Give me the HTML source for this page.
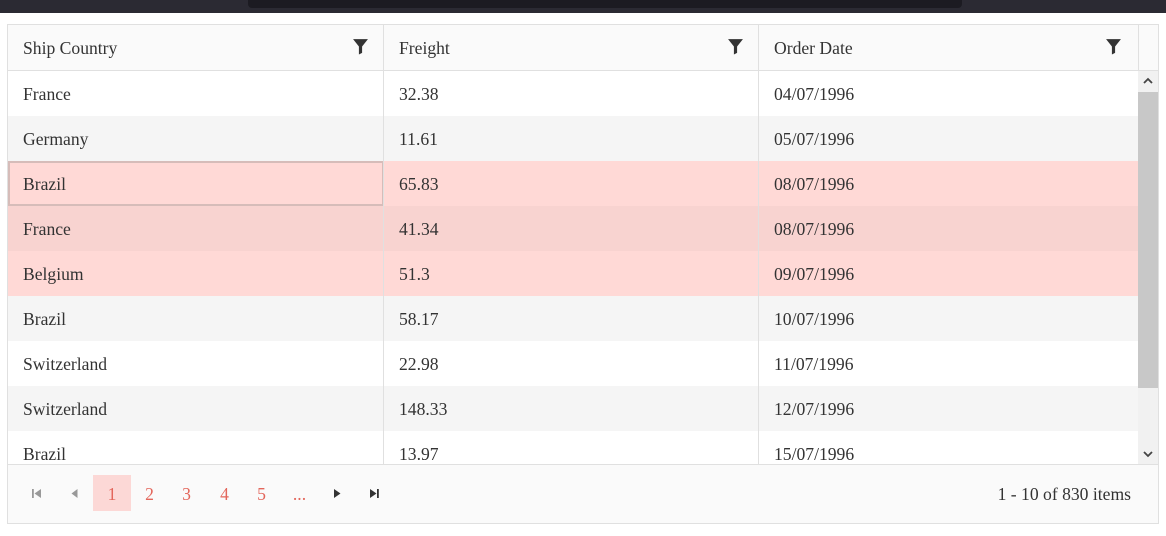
<!DOCTYPE html><html><head><style>
*{margin:0;padding:0;box-sizing:border-box}
body{width:1166px;height:536px;background:#fff;font-family:"Liberation Serif",serif;font-size:17.6px;color:#333;position:relative;overflow:hidden}
.top{position:absolute;left:0;top:0;width:1166px;height:13px;background:#2b2a33}
.top div{position:absolute;left:248px;top:0;width:714px;height:8px;background:#1c1b22;border-radius:0 0 4px 4px}
.grid{position:absolute;left:7px;top:24px;width:1152px;height:500px;border:1px solid #e0e0e0;background:#fafafa}
.c{position:absolute;height:45px;line-height:47px;padding-left:15px;white-space:nowrap}
.row{position:absolute;left:0;width:1130px;height:45px}
.v{position:absolute;top:0;width:1px;height:440px;background:#e0e0e0}
svg{position:absolute}
.pg{position:absolute;top:475px;height:36px;line-height:38px;color:#e3665b;text-align:center;width:37px}
</style></head><body>
<div class="top"><div></div></div>
<div class="grid">
<div style="position:absolute;left:0;top:0;width:1150px;height:46px;background:#fafafa;border-bottom:1px solid #e0e0e0"></div>
<div class="c" style="left:0;top:0">Ship Country</div>
<div class="c" style="left:376px;top:0">Freight</div>
<div class="c" style="left:751px;top:0">Order Date</div>
<svg style="left:344px;top:13px" width="17" height="17" viewBox="0 0 16 16"><path d="M1 1h14L9.5 8v6l-3 1.5V8z" fill="#333"/></svg>
<svg style="left:719px;top:13px" width="17" height="17" viewBox="0 0 16 16"><path d="M1 1h14L9.5 8v6l-3 1.5V8z" fill="#333"/></svg>
<svg style="left:1097px;top:13px" width="17" height="17" viewBox="0 0 16 16"><path d="M1 1h14L9.5 8v6l-3 1.5V8z" fill="#333"/></svg>
<div style="position:absolute;left:1130px;top:0;width:1px;height:46px;background:#e0e0e0"></div>
<div style="position:absolute;left:0;top:46px;width:1150px;height:394px;overflow:hidden;background:#fff">
<div class="row" style="top:0;background:#fff"></div>
<div class="row" style="top:45px;background:#f5f5f5"></div>
<div class="row" style="top:90px;background:#ffd9d6"></div>
<div class="row" style="top:135px;background:#f8d3d0"></div>
<div class="row" style="top:180px;background:#ffd9d6"></div>
<div class="row" style="top:225px;background:#f5f5f5"></div>
<div class="row" style="top:270px;background:#fff"></div>
<div class="row" style="top:315px;background:#f5f5f5"></div>
<div class="row" style="top:360px;background:#fff"></div>
<div style="position:absolute;left:0;top:90px;width:376px;height:45px;border:2px solid #d6bcb9"></div>
<div class="c" style="left:0;top:0">France</div><div class="c" style="left:376px;top:0">32.38</div><div class="c" style="left:751px;top:0">04/07/1996</div>
<div class="c" style="left:0;top:45px">Germany</div><div class="c" style="left:376px;top:45px">11.61</div><div class="c" style="left:751px;top:45px">05/07/1996</div>
<div class="c" style="left:0;top:90px">Brazil</div><div class="c" style="left:376px;top:90px">65.83</div><div class="c" style="left:751px;top:90px">08/07/1996</div>
<div class="c" style="left:0;top:135px">France</div><div class="c" style="left:376px;top:135px">41.34</div><div class="c" style="left:751px;top:135px">08/07/1996</div>
<div class="c" style="left:0;top:180px">Belgium</div><div class="c" style="left:376px;top:180px">51.3</div><div class="c" style="left:751px;top:180px">09/07/1996</div>
<div class="c" style="left:0;top:225px">Brazil</div><div class="c" style="left:376px;top:225px">58.17</div><div class="c" style="left:751px;top:225px">10/07/1996</div>
<div class="c" style="left:0;top:270px">Switzerland</div><div class="c" style="left:376px;top:270px">22.98</div><div class="c" style="left:751px;top:270px">11/07/1996</div>
<div class="c" style="left:0;top:315px">Switzerland</div><div class="c" style="left:376px;top:315px">148.33</div><div class="c" style="left:751px;top:315px">12/07/1996</div>
<div class="c" style="left:0;top:360px">Brazil</div><div class="c" style="left:376px;top:360px">13.97</div><div class="c" style="left:751px;top:360px">15/07/1996</div>
<div style="position:absolute;left:1130px;top:0;width:20px;height:394px;background:#f1f1f1"></div>
<div style="position:absolute;left:1130px;top:21px;width:20px;height:296px;background:#c8c8c8"></div>
<svg style="left:1134px;top:5px" width="12" height="10"><path d="M2 7l4-4 4 4" stroke="#444" stroke-width="1.8" fill="none"/></svg>
<svg style="left:1134px;top:378px" width="12" height="10"><path d="M2 3l4 4 4-4" stroke="#444" stroke-width="1.8" fill="none"/></svg>
</div>
<div class="v" style="left:375px"></div><div class="v" style="left:750px"></div>
<div style="position:absolute;left:0;top:439px;width:1150px;height:1px;background:#e0e0e0"></div>
</div>
<svg style="left:30px;top:487px" width="13" height="13"><path d="M2 2h1.8v9H2zM11 2v9L4.5 6.5z" fill="#999"/></svg>
<svg style="left:68px;top:487px" width="13" height="13"><path d="M9.5 2v9L3.5 6.5z" fill="#999"/></svg>
<div class="pg" style="left:93px;background:#fcd8d6;width:38px">1</div>
<div class="pg" style="left:131px">2</div>
<div class="pg" style="left:168px">3</div>
<div class="pg" style="left:206px">4</div>
<div class="pg" style="left:243px">5</div>
<div class="pg" style="left:281px">...</div>
<svg style="left:331px;top:487px" width="13" height="13"><path d="M3 2v9l6.5-4.5z" fill="#333"/></svg>
<svg style="left:368px;top:487px" width="13" height="13"><path d="M2 2v9l6.5-4.5zM9 2h1.8v9H9z" fill="#333"/></svg>
<div style="position:absolute;right:35px;top:475px;line-height:38px">1 - 10 of 830 items</div>
</body></html>
